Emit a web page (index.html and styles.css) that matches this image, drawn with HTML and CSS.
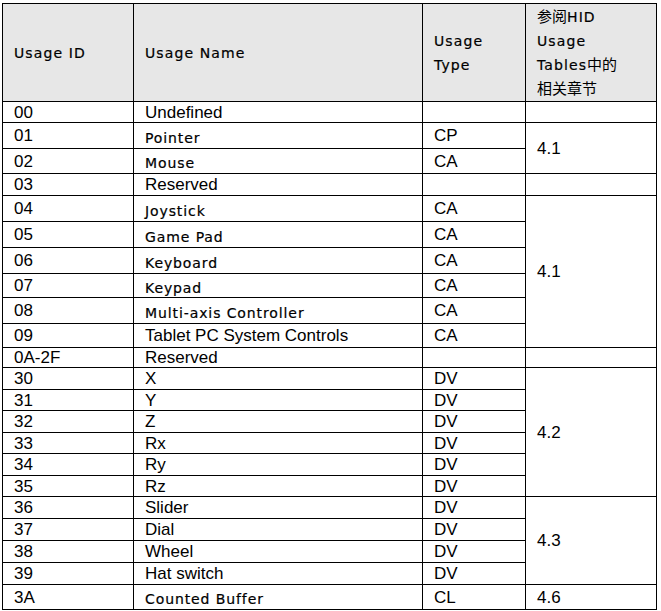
FILE: index.html
```html
<!DOCTYPE html>
<html lang="zh">
<head>
<meta charset="utf-8">
<title>Usage Table</title>
<link rel="stylesheet" href="styles.css">
</head>
<body>
<table class="usage">
  <colgroup>
    <col class="c-id"><col class="c-name"><col class="c-type"><col class="c-ref">
  </colgroup>
  <thead>
    <tr class="head">
      <th class="g">Usage ID</th>
      <th class="g">Usage Name</th>
      <th class="g">Usage<br>Type</th>
      <th class="g"><span class="cjk">参阅</span>HID<br>Usage<br>Tables<span class="cjk">中的</span><br><span class="cjk">相关章节</span></th>
    </tr>
  </thead>
  <tbody>
    <tr class="h21"><td>00</td><td>Undefined</td><td></td><td></td></tr>
    <tr class="h26"><td>01</td><td class="g">Pointer</td><td>CP</td><td rowspan="2">4.1</td></tr>
    <tr class="h25"><td>02</td><td class="g">Mouse</td><td>CA</td></tr>
    <tr class="h22"><td>03</td><td>Reserved</td><td></td><td></td></tr>
    <tr class="h26"><td>04</td><td class="g">Joystick</td><td>CA</td><td rowspan="6">4.1</td></tr>
    <tr class="h26"><td>05</td><td class="g">Game Pad</td><td>CA</td></tr>
    <tr class="h26"><td>06</td><td class="g">Keyboard</td><td>CA</td></tr>
    <tr class="h24"><td>07</td><td class="g">Keypad</td><td>CA</td></tr>
    <tr class="h26"><td>08</td><td class="g">Multi-axis Controller</td><td>CA</td></tr>
    <tr class="h24"><td>09</td><td>Tablet PC System Controls</td><td>CA</td></tr>
    <tr class="h20"><td>0A-2F</td><td>Reserved</td><td></td><td></td></tr>
    <tr class="h22"><td>30</td><td>X</td><td>DV</td><td rowspan="6">4.2</td></tr>
    <tr class="h21"><td>31</td><td>Y</td><td>DV</td></tr>
    <tr class="h22"><td>32</td><td>Z</td><td>DV</td></tr>
    <tr class="h21"><td>33</td><td>Rx</td><td>DV</td></tr>
    <tr class="h22"><td>34</td><td>Ry</td><td>DV</td></tr>
    <tr class="h21"><td>35</td><td>Rz</td><td>DV</td></tr>
    <tr class="h22"><td>36</td><td>Slider</td><td>DV</td><td rowspan="4">4.3</td></tr>
    <tr class="h22"><td>37</td><td>Dial</td><td>DV</td></tr>
    <tr class="h22"><td>38</td><td>Wheel</td><td>DV</td></tr>
    <tr class="h22"><td>39</td><td>Hat switch</td><td>DV</td></tr>
    <tr class="h25"><td>3A</td><td class="g">Counted Buffer</td><td>CL</td><td>4.6</td></tr>
  </tbody>
</table>
</body>
</html>
```
FILE: styles.css
```css
html, body {
  margin: 0;
  padding: 0;
  background: #ffffff;
}

.usage {
  margin: 3px 0 0 2px;
  border-collapse: collapse;
  table-layout: fixed;
  width: 655px;
  font-family: "Liberation Sans", Arial, sans-serif;
  font-size: 17px;
  color: #000;
}

.c-id { width: 131px; }
.c-name { width: 289px; }
.c-type { width: 103px; }
.c-ref { width: 131px; }

.usage th,
.usage td {
  border: 1px solid #000;
  padding: 0 6px 0 11px;
  text-align: left;
  vertical-align: middle;
  line-height: 19px;
  white-space: nowrap;
  overflow: hidden;
}

.head {
  height: 98px;
  background: #e7e7e7;
}

.usage th {
  font-weight: normal;
  line-height: 24px;
  padding-top: 0;
}

.g {
  font-family: "DejaVu Sans", "Noto Sans CJK SC", sans-serif;
  font-size: 14px;
  letter-spacing: 0.9px;
  -webkit-text-stroke: 0.2px #000;
}

.usage th.g {
  letter-spacing: 1.1px;
}

.usage td.g {
  padding-top: 4px;
  line-height: 18px;
}

.cjk {
  font-family: "Noto Sans CJK SC", sans-serif;
  font-size: 15px;
  line-height: 1;
  letter-spacing: 0;
  -webkit-text-stroke: 0;
}

.h20 { height: 20px; }
.h21 { height: 21px; }
.h22 { height: 22px; }
.h24 { height: 24px; }
.h25 { height: 25px; }
.h26 { height: 26px; }
```
